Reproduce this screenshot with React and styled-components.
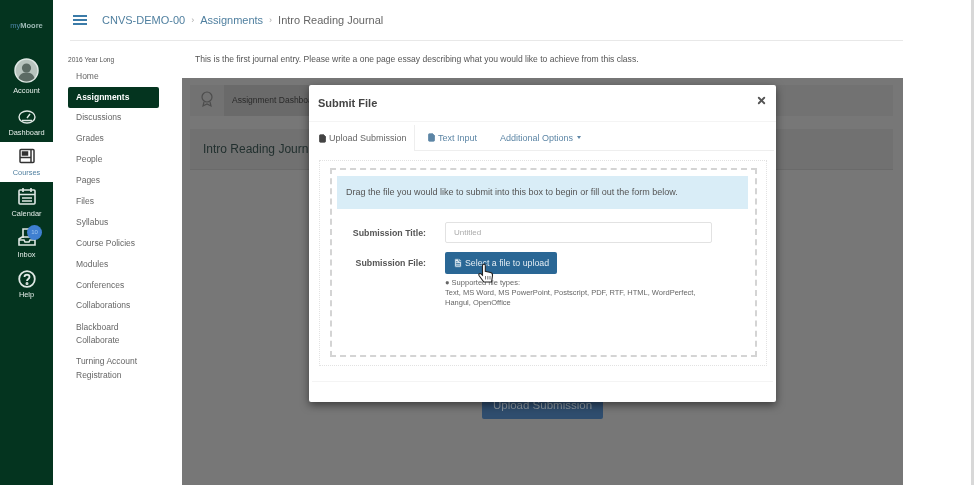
import React from 'react';
import styled, { createGlobalStyle } from 'styled-components';
import { FileText, X } from 'lucide-react';

const Global = createGlobalStyle`
  html, body { margin: 0; padding: 0; height: 485px; overflow: hidden; background: #fff; }
  body { font-family: "Liberation Sans", Arial, sans-serif; }
  #root { height: 485px; }
`;
const Page = styled.div`
  display: flex; width: 975px; height: 485px; box-sizing: border-box; overflow: hidden;
  filter: blur(0.6px); background: #fff;
`;
const Rail = styled.aside`
  width: 53px; flex: none; background: #04341f; display: flex; flex-direction: column; align-items: center;
`;
const Logo = styled.div`
  height: 58px; padding-top: 21px; box-sizing: border-box; font-size: 7.5px; line-height: 10px; font-weight: 700; color: #9fbab6; width: 100%; text-align: center;
  span { color: #4d86a8; font-weight: 400; }
`;
const RailItem = styled.div`
  position: relative; width: 100%; height: ${p => p.$h}px; display: flex; flex-direction: column; align-items: center;
  padding-top: ${p => p.$pt}px; box-sizing: border-box;
  background: ${p => (p.$active ? '#fff' : 'transparent')};
  color: ${p => (p.$active ? '#4f7f9f' : '#e6eeea')};
  font-size: 7.4px; line-height: 9px;
  svg { display: block; flex: none; }
`;
const RailLabel = styled.span`margin-top: ${p => p.$mt || 2}px;`;
const Badge = styled.span`
  position: absolute; left: 27px; top: 3px; width: 15px; height: 15px; border-radius: 50%;
  background: #3f7fd0; color: #9cc3ee; font-size: 6px; line-height: 15px; text-align: center;
`;
const Main = styled.main`
  flex: none; width: 850px; padding-left: 17px; box-sizing: border-box; display: flex; flex-direction: column;
`;
const Header = styled.header`
  height: 41px; flex: none; box-sizing: border-box; border-bottom: 1px solid #e8e8e8; display: flex; align-items: center; padding: 0 0 1px 3px;
`;
const Burger = styled.div`
  width: 14px; height: 10px; margin-right: 15px; display: flex; flex-direction: column; justify-content: space-between;
  i { display: block; height: 2px; background: #3b7ba8; }
`;
const Crumb = styled.span`
  font-size: 11px; color: ${p => p.$c || '#4f7f9f'}; white-space: nowrap;
`;
const Sep = styled.span`font-size: 9px; color: #aaa; margin: 0 6px;`;
const Body = styled.div`flex: 1; min-height: 0; display: flex;`;
const CourseNav = styled.nav`
  width: 112px; flex: none; display: flex; flex-direction: column; padding-top: 14px; box-sizing: border-box;
  margin-left: -2px; margin-right: 3px;
`;
const Term = styled.div`font-size: 6.6px; color: #555; height: 11px; line-height: 10px;`;
const NavItem = styled.div`
  width: 91px; box-sizing: border-box; padding: ${p => (p.$two ? '4px 8px 3.5px' : '0 8px')};
  min-height: 20.9px; display: flex; align-items: center; font-size: 8.5px; line-height: 13.5px;
  color: ${p => (p.$active ? '#fff' : '#666')}; font-weight: ${p => (p.$active ? 700 : 400)};
  background: ${p => (p.$active ? '#04341f' : 'transparent')};
  border-radius: 2px;
`;
const Column = styled.div`flex: 1; min-width: 0; display: flex; flex-direction: column; margin-left: -1px;`;
const Intro = styled.p`
  margin: 0; height: 37px; box-sizing: border-box; padding: 12px 0 0 13px; font-size: 8.55px; line-height: 12px; color: #555; white-space: nowrap;
`;
const Panel = styled.section`
  position: relative; flex: 1; background: #777; padding: 7px 10px 0 8px; display: flex; flex-direction: column;
`;
const Tools = styled.div`display: flex; align-items: stretch; height: 31px; gap: 9px; padding-left: 9px; background: #727272; margin: 0 0 13px 0;`;
const ToolLabel = styled.div`width: 90px; background: #6a6a6a; font-size: 8.5px; color: #2a2a2a; line-height: 31px; padding-left: 8px; white-space: nowrap; overflow: hidden;`;
const TitleBar = styled.div`
  height: 40px; background: #717171; border-bottom: 1px solid #6a6a6a; padding-left: 13px; font-size: 12px; line-height: 40px; color: #22302f; white-space: nowrap;
`;
const UploadBtn = styled.div`
  position: absolute; left: 300px; top: 316px; width: 121px; height: 25px; box-sizing: border-box; padding-top: 4px;
  background: #2f4d6e; border-radius: 2px; color: #8f9aa3; font-size: 11.5px; line-height: 14px; text-align: center; white-space: nowrap;
`;
const Modal = styled.div`
  position: absolute; left: 127px; top: 7px; width: 467px; height: 317px; background: #fff; border-radius: 2px;
  box-shadow: 0 3px 9px rgba(0,0,0,.5); display: flex; flex-direction: column;
`;
const ModalHead = styled.div`
  height: 36px; flex: none; display: flex; align-items: center; justify-content: space-between; padding: 0 9px; border-bottom: 1px solid #f4f4f4;
`;
const ModalTitle = styled.h3`margin: 0; font-size: 11px; font-weight: 700; color: #444;`;
const Tabs = styled.div`
  height: 29px; flex: none; display: flex; align-items: flex-start; border-bottom: 1px solid #eee; margin: 0 2px; box-sizing: border-box; padding-top: 3px;
`;
const Tab = styled.div`
  display: flex; align-items: center; gap: 2px; font-size: 9px; white-space: nowrap; padding: 0 ${p => p.$pr || 8}px 0 ${p => p.$pl || 7}px;
  color: ${p => (p.$active ? '#666' : '#5d86a6')}; box-sizing: border-box; height: ${p => (p.$active ? 26 : 25)}px;
  ${p => (p.$active ? 'background: #fff; border-right: 1px solid #eee; width: 104px;' : '')}
  svg { flex: none; }
`;
const Caret = styled.span`
  display: inline-block; margin-left: 2px; border-left: 2.5px solid transparent; border-right: 2.5px solid transparent; border-top: 3px solid #5d86a6;
`;
const Dotted = styled.div`
  margin: 9px 9px 0 10px; height: 206px; box-sizing: border-box; border: 1px dotted #e2e2e2; padding: 7px 9px 8px 10px;
`;
const Dashed = styled.div`
  height: 189px; box-sizing: border-box; border: 2px dashed #d4d4d4; padding: 6px 7px 0 5px; position: relative;
`;
const Alert = styled.div`
  height: 33px; background: #d9edf7; font-size: 9px; line-height: 32px; color: #555; padding-left: 9px; white-space: nowrap;
`;
const FormRow = styled.div`display: flex; align-items: ${p => (p.$top ? 'flex-start' : 'center')}; margin-top: ${p => p.$mt}px;`;
const FormLabel = styled.label`
  width: 89px; flex: none; text-align: right; font-size: 8.8px; font-weight: 700; color: #555; margin-right: 19px; white-space: nowrap; ${p => (p.$top ? 'line-height: 22px;' : '')}
`;
const TextBox = styled.div`
  width: 267px; height: 21px; box-sizing: border-box; border: 1px solid #e2e2e2; border-radius: 2px; font-size: 8px; line-height: 19px; color: #aaa; padding-left: 8px;
`;
const FileField = styled.div`position: relative; width: 255px;`;
const SelectBtn = styled.div`
  display: flex; align-items: center; justify-content: center; gap: 2px; width: 112px; height: 22px; background: #2a6795; border-radius: 2px; color: #e4edf3; font-size: 8.8px; white-space: nowrap;
`;
const Help = styled.div`font-size: 7.5px; line-height: 9.8px; color: #666; margin-top: 4px;`;
const Hand = styled.svg`position: absolute; left: 32px; top: 11px;`;
const Footer = styled.div`margin-top: 15px; border-top: 1px solid #f4f4f4; flex: 1; margin-left: 3px; margin-right: 3px;`;
const ScrollEdge = styled.div`width: 3px; height: 485px; background: #d8d8d8; margin-left: 68px; flex: none;`;

const Avatar = () => (
  <svg width="25" height="25" viewBox="0 0 25 25"><circle cx="12.500" cy="12.500" r="11.500" fill="#b8c4be" stroke="#dfe8e4" strokeWidth="1.500"/><circle cx="12.500" cy="10" r="4.600" fill="#5c6b64"/><path d="M4.500 20c1.500-4.500 5-5.500 8-5.500s6.500 1 8 5.500a11 11 0 0 1-16 0z" fill="#5c6b64"/></svg>
);
const Gauge = () => (
  <svg width="18" height="14" viewBox="0 0 18 14" fill="none" stroke="#dfe8e4" strokeWidth="1.400"><ellipse cx="9" cy="7" rx="8" ry="6"/><path d="M4 10.500h10M9 8l3-4"/></svg>
);
const Book = ({ c }) => (
  <svg width="16" height="16" viewBox="0 0 16 16" fill="none" stroke={c} strokeWidth="1.500"><rect x="1" y="1.500" width="14" height="13" rx="1"/><rect x="3.500" y="4" width="5" height="3" fill={c}/><path d="M1 9.500h11M12 1.500v13"/></svg>
);
const Calendar = () => (
  <svg width="18" height="18" viewBox="0 0 18 18" fill="none" stroke="#dfe8e4" strokeWidth="1.600"><rect x="1" y="3" width="16" height="14" rx="1"/><path d="M1 7.500h16M5 1v4M13 1v4M4 11h10M4 14h10"/></svg>
);
const Inbox = () => (
  <svg width="18" height="20" viewBox="0 0 18 20" fill="none" stroke="#dfe8e4" strokeWidth="1.600"><path d="M5 11V2h7v9"/><path d="M1 12l3-2h10l3 2v6H1z"/><path d="M1 13h5l1 2h4l1-2h5"/></svg>
);
const HelpIcon = () => (
  <svg width="18" height="18" viewBox="0 0 18 18" fill="none" stroke="#dfe8e4" strokeWidth="1.800"><circle cx="9" cy="9" r="7.800"/><path d="M6.500 7c0-3 5-3 5 0 0 2-2.500 2-2.500 4"/><circle cx="9" cy="13.500" r=".6"/></svg>
);

const nav = ['Discussions','Grades','People','Pages','Files','Syllabus','Course Policies','Modules','Conferences','Collaborations'];

export default function App() {
  return (
    <Page>
      <Global />
      <Rail>
        <Logo><span>my</span>Moore</Logo>
        <RailItem $h={45} $pt={0}><Avatar /><RailLabel $mt={3}>Account</RailLabel></RailItem>
        <RailItem $h={39} $pt={7}><Gauge /><RailLabel $mt={4}>Dashboard</RailLabel></RailItem>
        <RailItem $h={40} $pt={6} $active><Book c="#333" /><RailLabel $mt={4}>Courses</RailLabel></RailItem>
        <RailItem $h={40} $pt={5}><Calendar /><RailLabel $mt={4}>Calendar</RailLabel></RailItem>
        <RailItem $h={42} $pt={5}><Badge>10</Badge><Inbox /><RailLabel $mt={3}>Inbox</RailLabel></RailItem>
        <RailItem $h={40} $pt={6}><HelpIcon /><RailLabel $mt={2}>Help</RailLabel></RailItem>
      </Rail>
      <Main>
        <Header>
          <Burger><i /><i /><i /></Burger>
          <Crumb>CNVS-DEMO-00</Crumb><Sep>›</Sep><Crumb>Assignments</Crumb><Sep>›</Sep><Crumb $c="#666">Intro Reading Journal</Crumb>
        </Header>
        <Body>
          <CourseNav>
            <Term>2016 Year Long</Term>
            <NavItem>Home</NavItem>
            <NavItem $active>Assignments</NavItem>
            {nav.map(n => <NavItem key={n}>{n}</NavItem>)}
            <NavItem $two>Blackboard<br />Collaborate</NavItem>
            <NavItem $two>Turning Account<br />Registration</NavItem>
          </CourseNav>
          <Column>
            <Intro>This is the first journal entry. Please write a one page essay describing what you would like to achieve from this class.</Intro>
            <Panel>
              <Tools>
                <svg width="16" height="31" viewBox="0 0 16 31" fill="none" stroke="#4d4d4d" strokeWidth="1.200"><circle cx="8" cy="12" r="5"/><path d="M5 17l-1 4 4-2 4 2-1-4"/></svg>
                <ToolLabel>Assignment Dashboard</ToolLabel>
              </Tools>
              <TitleBar>Intro Reading Journal</TitleBar>
              <UploadBtn>Upload Submission</UploadBtn>
              <Modal>
                <ModalHead>
                  <ModalTitle>Submit File</ModalTitle>
                  <X size={11} strokeWidth={4} color="#555" style={{ marginTop: -6 }} />
                </ModalHead>
                <Tabs>
                  <Tab $active><FileText size={9} fill="#444" color="#444" />Upload Submission</Tab>
                  <Tab $pl={12} $pr={16}><FileText size={9} color="#5d86a6" fill="#5d86a6" />Text Input</Tab>
                  <Tab $pl={0}>Additional Options<Caret /></Tab>
                </Tabs>
                <Dotted>
                  <Dashed>
                    <Alert>Drag the file you would like to submit into this box to begin or fill out the form below.</Alert>
                    <FormRow $mt={13}>
                      <FormLabel>Submission Title:</FormLabel>
                      <TextBox>Untitled</TextBox>
                    </FormRow>
                    <FormRow $mt={9} $top>
                      <FormLabel $top>Submission File:</FormLabel>
                      <FileField>
                        <SelectBtn><FileText size={10} fill="#e4edf3" color="#2a6795" />Select a file to upload</SelectBtn>
                        <Help>● Supported file types:<br />Text, MS Word, MS PowerPoint, Postscript, PDF, RTF, HTML, WordPerfect, Hangul, OpenOffice</Help>
                        <Hand width="18" height="21" viewBox="0 0 18 21"><path d="M6 1.500c1-.8 2.300-.2 2.300 1.200v5.500l5.200 1.300c1.600.4 2.200 1.500 2 3l-.9 6.500H6.800L2 12.500c-.8-1.400.8-2.600 2-1.700l1.500 1.400V2.700c0-.4.200-.9.500-1.200z" fill="#fff" stroke="#222" strokeWidth="1.100"/><path d="M8.500 13v3.500M10.800 13v3.500M13 13v3.500" stroke="#555" strokeWidth=".8" fill="none"/></Hand>
                      </FileField>
                    </FormRow>
                  </Dashed>
                </Dotted>
                <Footer />
              </Modal>
            </Panel>
          </Column>
        </Body>
      </Main>
      <ScrollEdge />
    </Page>
  );
}
